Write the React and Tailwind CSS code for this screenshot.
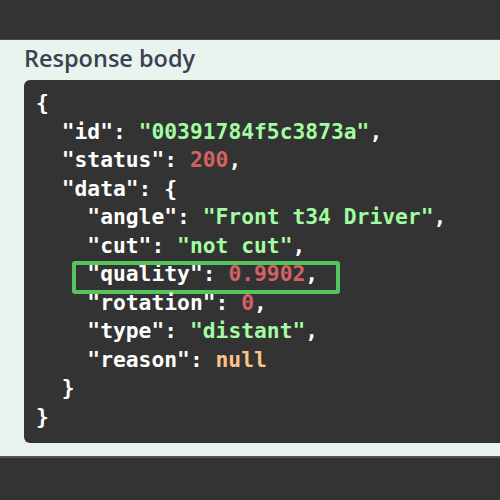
import React from 'react';

const Key = ({ children }) => <span className="text-white">"{children}"</span>;
const Str = ({ children }) => <span className="text-[#a2fca2]">"{children}"</span>;
const Num = ({ children }) => <span className="text-[#d36363]">{children}</span>;
const Lit = ({ children }) => <span className="text-[#fcc28c]">{children}</span>;

const Line = ({ indent = 0, children, highlight }) => (
  <div className="relative h-[28.5px] whitespace-pre">
    {'  '.repeat(indent)}
    {children}
    {highlight && (
      <span className="absolute left-[36px] top-[1px] w-[268px] h-[33px] border-4 border-[#55c45c] rounded-[3px]" />
    )}
  </div>
);

export default function App() {
  return (
    <div className="w-[500px] h-[500px] bg-[#333333] overflow-hidden flex flex-col">
      {/* top bar */}
      <div className="h-[40px] bg-[#333333] border-b border-[#4a4a4a]" />

      {/* response section */}
      <div className="h-[418px] bg-[#eaf4ef] pt-[4px] border-b-2 border-[#555555]">
        <h4 className="ml-[24px] h-[28px] leading-[28px] text-[23.5px] font-semibold text-[#3b4151] font-['Open_Sans',sans-serif]">
          Response body
        </h4>
        <div className="ml-[24px] mt-[8px] h-[363px] bg-[#333333] rounded-l-[6px] pl-[12px] pt-[9px] text-[21.3px] leading-[28.5px] font-bold text-white font-['DejaVu_Sans_Mono',monospace]">
          <Line>{'{'}</Line>
          <Line indent={1}><Key>id</Key>: <Str>00391784f5c3873a</Str>,</Line>
          <Line indent={1}><Key>status</Key>: <Num>200</Num>,</Line>
          <Line indent={1}><Key>data</Key>: {'{'}</Line>
          <Line indent={2}><Key>angle</Key>: <Str>Front t34 Driver</Str>,</Line>
          <Line indent={2}><Key>cut</Key>: <Str>not cut</Str>,</Line>
          <Line indent={2} highlight><Key>quality</Key>: <Num>0.9902</Num>,</Line>
          <Line indent={2}><Key>rotation</Key>: <Num>0</Num>,</Line>
          <Line indent={2}><Key>type</Key>: <Str>distant</Str>,</Line>
          <Line indent={2}><Key>reason</Key>: <Lit>null</Lit></Line>
          <Line indent={1}>{'}'}</Line>
          <Line>{'}'}</Line>
        </div>
      </div>
    </div>
  );
}
